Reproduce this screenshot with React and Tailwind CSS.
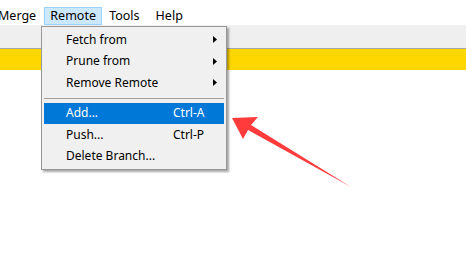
import React from 'react';

const font = { fontFamily: '"Noto Sans", "Noto Sans CJK SC", sans-serif' };

const items = [
  { label: 'Fetch from', sub: true },
  { label: 'Prune from', sub: true },
  { label: 'Remove Remote', sub: true },
  { sep: true },
  { label: 'Add...', key: 'Ctrl-A', active: true },
  { label: 'Push...', key: 'Ctrl-P' },
  { label: 'Delete Branch...' },
];

const Caret = () => (
  <svg width="4" height="7" viewBox="0 0 4 7" className="absolute left-[169px] top-[7px]">
    <path d="M0 0 L4 3.5 L0 7 Z" fill="#000" />
  </svg>
);

const App = () => {
  return (
    <div className="relative w-[466px] h-[270px] overflow-hidden bg-white text-[12px] text-black" style={font}>
      {/* menubar */}
      <div className="h-[25px] flex items-end">
        <div className="flex h-[18px] items-center ml-[-7px]">
          <span className="px-[5px] leading-none text-[12.5px]">Merge</span>
          <span className="ml-[3px] h-[18px] w-[58px] justify-center flex items-center bg-[#cce8ff] border border-[#99d1ff] leading-none text-[12.5px]">Remote</span>
          <span className="ml-[2px] px-[5px] leading-none text-[12.5px]">Tools</span>
          <span className="ml-[6px] px-[5px] leading-none text-[12.5px]">Help</span>
        </div>
      </div>
      <div className="h-[23px] bg-[#efefef]" />
      <div className="h-px bg-[#a8a8a8]" />
      <div className="h-[21px] bg-[#ffd700]" />

      {/* dropdown */}
      <div className="absolute left-[41px] top-[26px] w-[186px] bg-[#f0f0f0] border border-[#979797] py-[2px] shadow-[2px_2px_2px_rgba(0,0,0,0.35)]">
        {items.map((it, i) =>
          it.sep ? (
            <div key={i} className="h-[9px] flex items-center mx-[2px]">
              <div className="w-full h-px bg-[#a0a0a0]" />
            </div>
          ) : (
            <div
              key={i}
              className={
                'relative h-[21.5px] mx-[2px] flex items-center ' +
                (it.active ? 'bg-[#0078d7] text-white' : '')
              }
            >
              <span className="ml-[22px] w-[107px]">{it.label}</span>
              {it.key && <span>{it.key}</span>}
              {it.sub && <Caret />}
            </div>
          )
        )}
      </div>

      {/* red arrow */}
      <svg className="absolute left-0 top-0" width="466" height="270" viewBox="0 0 466 270">
        <path d="M232 118 L258 117 L251 125 L351 187 L248 130 L243 139 Z" fill="#ff3b3b" />
      </svg>
    </div>
  );
};

export default App;
